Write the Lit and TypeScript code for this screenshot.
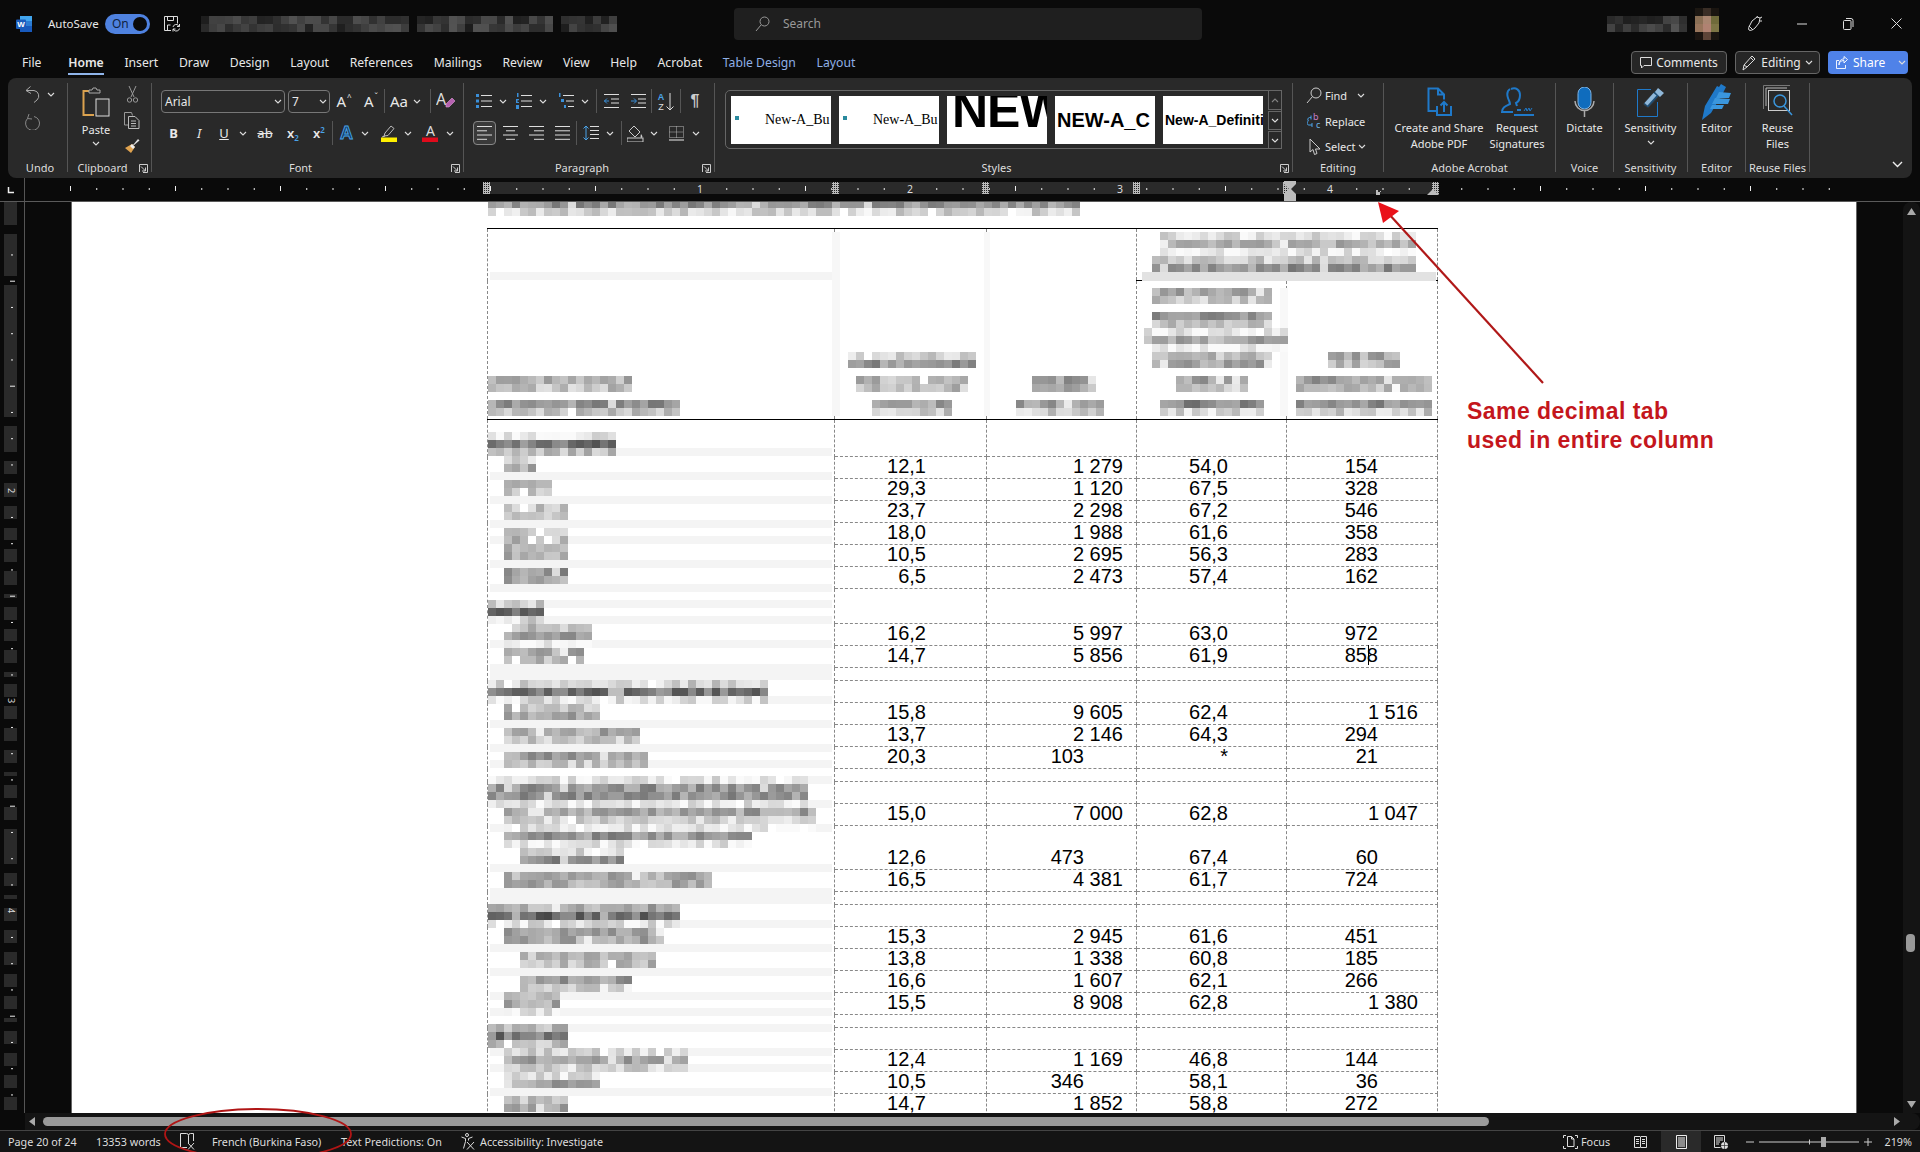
import { LitElement, html, css, svg } from 'lit';
import { customElement } from 'lit/decorators.js';

// small seeded generator so the pixelated areas stay the same between runs
let seed = 4711;
const rnd = () => {
  seed = (seed * 16807) % 2147483647;
  return seed / 2147483647;
};

const chev = html`<svg width="8" height="5" viewBox="0 0 8 5"><path d="M1 1l3 3 3-3" fill="none" stroke="#ddd" stroke-width="1.1"/></svg>`;
const lines = (ys: number[], x1: number, x2: number, c = '#ddd') =>
  ys.map((y) => svg`<path d="M${x1} ${y}H${x2}" stroke=${c} stroke-width="1"/>`);

const launcher = html`<svg class="launcher" width="9" height="9" viewBox="0 0 9 9"><path d="M.5 8V.5H8.5V8.5H4M2 2.5l4.5 4.5M6.5 3.5V7H3" fill="none" stroke="#ccc"/></svg>`;

const icons = {
  word: html`<svg width="16" height="16" viewBox="0 0 16 16"><path d="M4 0h12v16H4z" fill="#185abd"/><path d="M4 0h12v5H4z" fill="#41a5ee"/><path d="M4 5h12v5H4z" fill="#2b7cd3"/><rect x="0" y="3.5" width="10" height="9.5" rx="1" fill="#1a5cbc"/><text x="5" y="11" font-size="8" font-weight="700" text-anchor="middle" fill="#fff" font-family="Liberation Sans">W</text></svg>`,
  save: html`<svg width="18" height="17" viewBox="0 0 18 17"><path d="M8 15.5H1.5V1.5h13v7M4.5 1.5v4h6v-4M4.5 15V10h3" fill="none" stroke="#ddd"/><path d="M10 12a3.2 3.2 0 0 1 5.5-1.5l1 1M16.5 13.5a3.2 3.2 0 0 1-5.5 1.5l-1-1M16.5 9v2.5H14M10 16.5V14h2.5" fill="none" stroke="#ddd"/></svg>`,
  search: html`<svg width="15" height="16" viewBox="0 0 15 16"><circle cx="9.5" cy="5.5" r="4.5" fill="none" stroke="#999"/><path d="M6 9l-5 6" stroke="#999"/></svg>`,
  pen: html`<svg width="16" height="18" viewBox="0 0 16 18"><path d="M5 6l5-4 3 1-1 5-4 5c-2 2-5 3-6 2s0-4 1-5zM10 2l.5-1M13 3l2-1M13 6h2M2 11l4 4" fill="none" stroke="#ddd"/></svg>`,
  min: html`<svg width="10" height="2" viewBox="0 0 10 2"><path d="M0 1h10" stroke="#ddd"/></svg>`,
  restore: html`<svg width="11" height="12" viewBox="0 0 11 12"><rect x=".5" y="2.5" width="7.5" height="9" rx="1" fill="none" stroke="#ddd"/><path d="M3 .5h5a2 2 0 0 1 2 2V9" fill="none" stroke="#ddd"/></svg>`,
  close: html`<svg width="11" height="11" viewBox="0 0 11 11"><path d="M.5.5l10 10M10.5.5l-10 10" stroke="#ddd"/></svg>`,
  comment: html`<svg width="12" height="12" viewBox="0 0 12 12"><path d="M.5.5h11v8H4L1.5 11V8.5h-1z" fill="none" stroke="#ddd"/></svg>`,
  edit: html`<svg width="15" height="17" viewBox="0 0 15 17"><path d="M1 16l1-5 8-9 3 3-8 8zM2 11l3 2M8.500 3.500l3 3" fill="none" stroke="#ddd"/></svg>`,
  share: html`<svg width="12" height="13" viewBox="0 0 12 13"><path d="M3 4.500H.5v8h9V9M3 9c0-3 2-4.500 5-4.500V7l3.500-3.500L8 .5v2.500C4 3 3 6 3 9z" fill="none" stroke="#fff" stroke-width=".9"/></svg>`,
  undo: html`<svg width="16" height="17" viewBox="0 0 16 17"><path d="M5.500.5L1 4.500l5 3M1 4.500h8a5.500 5.500 0 0 1 3 9.500l-3 2.500" fill="none" stroke="#aaa"/></svg>`,
  redo: html`<svg width="16" height="17" viewBox="0 0 16 17"><path d="M4 1L2.500 5.500 7 6M2.500 5.500A7 7 0 1 0 9 3.500" fill="none" stroke="#888"/></svg>`,
  paste: html`<svg width="28" height="30" viewBox="0 0 28 30"><path d="M7 4H1.500v24H12" fill="none" stroke="#dba24f" stroke-width="2"/><path d="M7 6V3h3l1-2h3l1 2h3v3z" fill="none" stroke="#aaa"/><rect x="14" y="12" width="13" height="17" fill="#333" stroke="#ddd"/></svg>`,
  cut: html`<svg width="11" height="17" viewBox="0 0 11 17"><path d="M2 0l5 11M9 0L4 11" stroke="#999" fill="none"/><circle cx="2.500" cy="14" r="2.200" fill="none" stroke="#999"/><circle cx="8.500" cy="14" r="2.200" fill="none" stroke="#999"/></svg>`,
  copy: html`<svg width="16" height="17" viewBox="0 0 16 17"><path d="M4 13H.5V.5h7l1 3" fill="none" stroke="#999"/><path d="M4.500 4.500H11l4 4v8H4.500zM7 9h5M7 11.500h5M7 14h5" fill="none" stroke="#bbb"/></svg>`,
  brush: html`<svg width="16" height="16" viewBox="0 0 16 16"><path d="M9 7l5-6 1.500 1.500-6 5z" fill="#ddd"/><path d="M8 6l3 3-4 6-6-5z" fill="#e0a34f"/><path d="M8 6l3 3-2 2-3-3z" fill="#eee"/></svg>`,
  clear: html`<svg width="19" height="18" viewBox="0 0 19 18"><text x="0" y="13" font-size="16" fill="#ddd" font-family="Noto Sans">A</text><path d="M10 12l6-6 3 3-6 6h-3z" fill="#b561b0" stroke="#e0a0dc" stroke-width=".6"/></svg>`,
  textfx: html`<svg width="17" height="18" viewBox="0 0 17 18"><text x="8.500" y="15" text-anchor="middle" font-size="18" font-weight="700" fill="#123e66" stroke="#4aa3e8" stroke-width=".9" font-family="Liberation Sans">A</text></svg>`,
  high: html`<svg width="17" height="18" viewBox="0 0 17 18"><path d="M3 12l1-3 6-7 3 2.500-6 7zM1 13l3-1" fill="none" stroke="#bbb"/><rect y="13.500" width="16" height="4.500" fill="#fff000"/></svg>`,
  color: html`<svg width="17" height="18" viewBox="0 0 17 18"><text x="8.500" y="12" text-anchor="middle" font-size="14" fill="#ddd" font-family="Noto Sans">A</text><rect y="13.500" width="16" height="4.500" fill="#e00b1c"/></svg>`,
  bullets: html`<svg width="16" height="16" viewBox="0 0 16 16"><path d="M0 1h3v3H0zM0 6.500h3v3H0zM0 12h3v3H0z" fill="#3a8fd8"/>${lines([2.500, 8, 13.500], 5, 16)}</svg>`,
  numbers: html`<svg width="16" height="16" viewBox="0 0 16 16"><path d="M1 0h1.500v4H1zM0 6h3v1.200H1.500V9H3v1H0zM0 12h3v4H0z" fill="#3a8fd8"/>${lines([2.500, 8, 13.500], 5, 16)}</svg>`,
  multi: html`<svg width="16" height="16" viewBox="0 0 16 16"><path d="M1 0h1.500v4H1zM3 6h3v3H3zM6 12h2v3H6z" fill="#3a8fd8"/>${lines([2.500], 5, 16)}${lines([8], 8, 16)}${lines([13.500], 10, 16)}</svg>`,
  outdent: html`<svg width="15" height="14" viewBox="0 0 15 14"><path d="M5 7H0M3 4.500L.5 7 3 9.500" fill="none" stroke="#3a8fd8"/>${lines([.5, 13.500], 0, 15)}${lines([5, 9], 7, 15)}</svg>`,
  indent: html`<svg width="15" height="14" viewBox="0 0 15 14"><path d="M0 7h5M3 4.500L5.500 7 3 9.500" fill="none" stroke="#3a8fd8"/>${lines([.5, 13.500], 0, 15)}${lines([5, 9], 7, 15)}</svg>`,
  sort: html`<svg width="18" height="19" viewBox="0 0 18 19"><text x="4" y="8" font-size="9" text-anchor="middle" font-weight="700" fill="#4aa3e8" font-family="Liberation Sans">A</text><text x="4" y="18" font-size="9" text-anchor="middle" fill="#ddd" font-family="Liberation Sans">Z</text><path d="M13 1v17M9.500 14.500L13 18l3.500-3.500" fill="none" stroke="#ddd"/></svg>`,
  left: html`<svg width="15" height="14" viewBox="0 0 15 14">${lines([.5, 9], 0, 15)}${lines([4.800, 13.300], 0, 10)}</svg>`,
  center: html`<svg width="15" height="14" viewBox="0 0 15 14">${lines([.5, 9], 0, 15)}${lines([4.800, 13.300], 3, 12)}</svg>`,
  right: html`<svg width="15" height="14" viewBox="0 0 15 14">${lines([.5, 9], 0, 15)}${lines([4.800, 13.300], 5, 15)}</svg>`,
  justify: html`<svg width="15" height="14" viewBox="0 0 15 14">${lines([.5, 4.800, 9, 13.300], 0, 15)}</svg>`,
  spacing: html`<svg width="16" height="16" viewBox="0 0 16 16"><path d="M3 1v14M.5 3.500L3 1l2.500 2.500M.5 12.500L3 15l2.500-2.500" fill="none" stroke="#4aa3e8"/>${lines([1.500, 5.500, 9.500, 13.500], 7, 16)}</svg>`,
  shade: html`<svg width="17" height="17" viewBox="0 0 17 17"><path d="M7 1l6 6-5 5-6-6z" fill="none" stroke="#ccc"/><path d="M14 9c1 1.500 2 2.500 1 3.500s-2 0-1-3.500z" fill="#ccc"/><rect y="13" width="16" height="4" fill="none" stroke="#ccc"/></svg>`,
  borders: html`<svg width="15" height="15" viewBox="0 0 15 15"><path d="M.5.5h14v11H.5zM7.500.5v11M.5 6h14" fill="none" stroke="#bbb" stroke-dasharray="1 1"/><path d="M0 14h15" stroke="#eee"/></svg>`,
  find: html`<svg width="16" height="17" viewBox="0 0 16 17"><circle cx="10" cy="6" r="5" fill="none" stroke="#ccc"/><path d="M6.500 9.500L1 16" stroke="#ccc"/></svg>`,
  replace: html`<svg width="15" height="16" viewBox="0 0 15 16"><text x="6" y="7" font-size="9" fill="#c77fc7" font-family="Noto Sans">b</text><text x="9" y="15" font-size="9" fill="#6fb6e8" font-family="Noto Sans">c</text><path d="M4 4.500H2.500a2 2 0 0 0-1 3.500M5 12H3a2 2 0 0 1-1.500-4M4 2.500v4M5 10v4" fill="none" stroke="#4aa3e8"/></svg>`,
  select: html`<svg width="11" height="18" viewBox="0 0 11 18"><path d="M1 1v13l3-2.500 1.500 5 2.500-1-1.500-4.500H11z" fill="none" stroke="#ccc"/></svg>`,
  create: html`<svg width="25" height="30" viewBox="0 0 25 30"><path d="M11 24H1.500V1.500H11l6 6v5M11 1.500v6h6" fill="none" stroke="#1f79c9" stroke-width="2"/><path d="M10 19v9h14v-9M17 25V15M13.500 18.500L17 15l3.500 3.500" fill="none" stroke="#1f79c9" stroke-width="2"/></svg>`,
  request: html`<svg width="33" height="30" viewBox="0 0 33 30"><path d="M10 2c5-2 9 1 9 6s-2 7-4 8l1 3M9 2C6 4 6 8 7 11s2 4 2 6c-4 2-8 3-8 8h11" fill="none" stroke="#1f79c9" stroke-width="2"/><path d="M16 22l2 2 2-2m-4 2l2-2 2 2M23 24l2-3 1 3 2-3 1 3 2-3" fill="none" stroke="#1f79c9"/><path d="M13 28h20" stroke="#1f79c9" stroke-width="2"/></svg>`,
  mic: html`<svg width="21" height="30" viewBox="0 0 21 30"><rect x="4" y="0" width="13" height="22" rx="6.500" fill="#0f6cbd" stroke="#7cb4e6"/><path d="M1 14a9.500 9.500 0 0 0 19 0M10.500 24v6" fill="none" stroke="#aaa" stroke-width="1.500"/></svg>`,
  sens: html`<svg width="28" height="30" viewBox="0 0 28 30"><path d="M14 2.500H.5v27h20V15" fill="none" stroke="#1f79c9"/><path d="M6 17l13-14 5 4-13 14z" fill="#1f4e75" stroke="#333"/><path d="M18 5l3-4 6 5-4 4zM7.500 16l9-10 3 2.500-9 10z" fill="#8fb7d8"/></svg>`,
  editor: html`<svg width="31" height="37" viewBox="0 0 31 37"><path d="M1 37l3-14L16 3l2 1 2-3 5 3-2 4-1 2L10 30z" fill="#1f79c9"/><path d="M18 9l12 1-2 5-13 0zM14 15l15 1-2 5-16 0zM11 22l12 0-2 4-12 0z" fill="#3a96dd"/></svg>`,
  reuse: html`<svg width="30" height="34" viewBox="0 0 30 34"><path d="M3 21V3h21" fill="none" stroke="#bbb"/><path d="M.5 24V.5H27" fill="none" stroke="#777"/><rect x="5.500" y="5.500" width="21" height="20" fill="none" stroke="#ccc"/><circle cx="17" cy="16" r="6" fill="none" stroke="#3a96dd" stroke-width="1.500"/><path d="M21 21l8 9" stroke="#3a96dd" stroke-width="1.500"/></svg>`,
  collapse: html`<svg width="11" height="7" viewBox="0 0 11 7"><path d="M1 1l4.500 4.500L10 1" fill="none" stroke="#eee" stroke-width="1.400"/></svg>`,
  spell: html`<svg width="15" height="17" viewBox="0 0 15 17"><path d="M7 14.500H.5V.5h6a2 2 0 0 1 2 2v8M8.500 2.500a2 2 0 0 1 2-2h3V8" fill="none" stroke="#ddd"/><path d="M8 10l6 6.500M14 10l-6 6.500" stroke="#ddd"/></svg>`,
  access: html`<svg width="15" height="17" viewBox="0 0 15 17"><circle cx="6" cy="2" r="1.500" fill="none" stroke="#ddd"/><path d="M.5 4l4 1.500v3l-2 7M11.500 4l-4 1.500v2" fill="none" stroke="#ddd"/><path d="M6 9l7 7.500M13 9l-7 7.500" stroke="#ddd"/></svg>`,
  focus: html`<svg width="15" height="14" viewBox="0 0 15 14"><path d="M.5 3V.5H3M12 .5h2.500V3M.5 11v2.500H3M12 13.500h2.500V11" fill="none" stroke="#ddd"/><path d="M4.500 11.500v-10h4l2.500 2.500v7.500zM8.500 1.500V4H11" fill="none" stroke="#ddd"/></svg>`,
  read: html`<svg width="13" height="14" viewBox="0 0 13 14"><path d="M.5 1.500h5.500l.5.500.5-.5h5.500v11H7l-.5.500-.5-.5H.5zM6.500 2v10.500M2 4.500h3M2 6.500h3M2 8.500h3M8 4.500h3M8 6.500h3M8 8.500h3" fill="none" stroke="#ddd"/></svg>`,
  print: html`<svg width="11" height="14" viewBox="0 0 11 14"><path d="M.5.5h10v13H.5zM2 3h7M2 5h7M2 7h7M2 9h7M2 11h7" fill="none" stroke="#eee"/></svg>`,
  web: html`<svg width="14" height="14" viewBox="0 0 14 14"><path d="M.5.5h10v7M.5.5v12h6M2 3h7M2 5h7M2 7h4M2 9h3" fill="none" stroke="#ddd"/><circle cx="10.500" cy="10.500" r="3.500" fill="#ddd"/><path d="M7 10.500h7M10.500 7v7" stroke="#333" stroke-width=".7"/></svg>`,
};

// [x, y, columns, ...row shades], all on the 8px grid of the blurred original
const BLURS: number[][] = [
  [488, 200, 74, 150, 215],
  [1160, 232, 32, 225, 170, 235], [1152, 256, 33, 205, 150],
  [1152, 288, 15, 165, 200], [1152, 312, 15, 150, 200], [1144, 328, 18, 235, 170, 240],
  [1152, 352, 15, 190, 165], [1176, 376, 9, 165, 200], [1160, 400, 13, 140, 215],
  [848, 352, 16, 215, 150], [856, 376, 14, 185, 190], [872, 400, 10, 160, 200],
  [1032, 376, 8, 160, 175], [1016, 400, 11, 165, 205],
  [1328, 352, 9, 170, 185], [1296, 376, 17, 160, 180], [1296, 400, 17, 150, 205],
  [488, 376, 18, 175, 195], [488, 400, 24, 150, 200],
  [488, 432, 16, 235, 120, 190],
  [504, 456, 4, 205, 170], [504, 480, 6, 185, 200], [504, 504, 8, 195, 200],
  [504, 528, 8, 190, 190], [504, 544, 8, 170, 180], [504, 568, 8, 150, 170],
  [488, 600, 7, 200, 120, 215], [504, 624, 11, 190, 150, 235], [504, 648, 10, 170, 190],
  [488, 680, 35, 210, 120, 225], [504, 704, 12, 190, 165], [504, 728, 17, 170, 200], [504, 752, 18, 160, 200],
  [488, 776, 40, 232, 150, 150, 232], [504, 808, 39, 165, 210, 232], [504, 832, 31, 150, 235],
  [520, 848, 13, 215, 145], [504, 872, 26, 175, 175],
  [488, 904, 24, 170, 110, 225], [504, 928, 20, 170, 170], [520, 952, 17, 185, 190], [520, 976, 14, 160, 215],
  [504, 992, 7, 200, 170, 225], [488, 1024, 10, 190, 120, 190], [504, 1048, 23, 215, 160, 215],
  [504, 1072, 12, 225, 160], [504, 1096, 8, 195, 160],
];
const BANDS = [272, 448, 472, 496, 520, 536, 560, 584, 600, 616, 640, 664, 672, 696, 720, 744, 760, 776, 800, 824, 864, 888, 896, 920, 944, 968, 992, 1008, 1024, 1048, 1064, 1088];

const blurCells = (x: number, y: number, cols: number, shades: number[], gapChance = 0.04) =>
  shades.map((base, r) =>
    Array.from({ length: cols }, (_, c) => {
      const spread = base < 130 ? 80 : 66;
      const g = rnd() < gapChance ? Math.min(255, base + 70) : Math.max(50, Math.min(250, Math.round(base + (rnd() - 0.5) * spread)));
      return svg`<rect x=${x + c * 8} y=${y + r * 8} width="8" height="8" fill="rgb(${g},${g},${g})"/>`;
    })
  );

const darkCells = (x: number, y: number, cols: number, rows: number) =>
  Array.from({ length: rows }, (_, r) =>
    Array.from({ length: cols }, (_, c) => {
      const g = Math.round(28 + rnd() * 55);
      return svg`<rect x=${x + c * 8} y=${y + r * 8} width="8" height="8" fill="rgb(${g},${g},${g})"/>`;
    })
  );

type Row = [number, string?, string?, string?, string?];
const ROWS: Row[] = [
  [37], [22, '12,1', '1 279', '54,0', '154'], [21, '29,3', '1 120', '67,5', '328'], [22, '23,7', '2 298', '67,2', '546'],
  [22, '18,0', '1 988', '61,6', '358'], [22, '10,5', '2 695', '56,3', '283'], [22, '6,5', '2 473', '57,4', '162'],
  [35], [22, '16,2', '5 997', '63,0', '972'], [22, '14,7', '5 856', '61,9', '858'],
  [13], [22], [22, '15,8', '9 605', '62,4', '1 516'], [22, '13,7', '2 146', '64,3', '294'], [22, '20,3', '103', '*', '21'],
  [13], [22], [22, '15,0', '7 000', '62,8', '1 047'], [44, '12,6', '473', '67,4', '60'], [22, '16,5', '4 381', '61,7', '724'],
  [13], [22], [22, '15,3', '2 945', '61,6', '451'], [22, '13,8', '1 338', '60,8', '185'], [22, '16,6', '1 607', '62,1', '266'], [22, '15,5', '8 908', '62,8', '1 380'],
  [13], [22], [22, '12,4', '1 169', '46,8', '144'], [22, '10,5', '346', '58,1', '36'], [22, '14,7', '1 852', '58,8', '272'],
];
const MID = new Set(['103', '473', '346']);
const FAR = new Set(['1 516', '1 047', '1 380']);

// ruler ticks are a quarter of a 210px inch apart
const Q = 26.25;

@customElement('app-root')
export class AppRoot extends LitElement {
  static styles = css`
    :host {
      display: block;
      position: relative;
      width: 1920px;
      height: 1152px;
      overflow: hidden;
      background: #0a0a0a;
      color: #e8e8e8;
      font-family: 'Noto Sans', 'Open Sans', sans-serif;
      font-size: 12px;
    }
    svg { display: block; flex: none; }

    .titlebar { display: flex; align-items: center; height: 47px; }
    .tb-left { width: 734px; display: flex; align-items: center; padding-left: 16px; box-sizing: border-box; }
    .autosave { margin-left: 16px; width: 57px; font-size: 11.500px; }
    .toggle {
      width: 45px; height: 20px; border-radius: 10px; background: #4f82e0; color: #10223f;
      display: flex; align-items: center; justify-content: space-between; padding: 0 3px 0 7px; box-sizing: border-box; font-size: 12px;
    }
    .knob { width: 14px; height: 14px; border-radius: 50%; background: #0a0a0a; }
    .save { margin: 0 20px 0 13px; }
    .search {
      width: 468px; height: 32px; background: #1f1f1f; border-radius: 4px; display: flex; align-items: center;
      padding-left: 21px; box-sizing: border-box; gap: 13px; color: #999;
    }
    .tb-right { flex: 1; display: flex; align-items: center; justify-content: flex-end; }
    .who { margin-right: 12px; }
    .win { width: 47px; display: flex; justify-content: center; }
    .win:last-child { width: 48px; }

    .tabs { display: flex; align-items: center; height: 31px; padding: 0 12px 0 22px; gap: 20.700px; font-size: 12.200px; }
    .tab { position: relative; line-height: 31px; }
    .tab:first-child { margin-right: 6px; }
    .tab.on { font-weight: 600; }
    .tab.on::after { content: ''; position: absolute; left: 0; right: 0; bottom: 3px; height: 2px; background: #8fb4ea; }
    .tab.ctx { color: #8fb0e6; }
    .actions { margin-left: auto; display: flex; gap: 8px; font-size: 12px; }
    .btn {
      height: 23px; border: 1px solid #666; border-radius: 4px; background: #262626; display: flex; align-items: center;
      justify-content: center; gap: 4px; box-sizing: border-box;
    }
    .btn.comments { width: 96px; }
    .btn.editing { width: 85px; }
    .btn.share { width: 80px; background: #4f82e8; border: none; color: #fff; justify-content: flex-start; padding-left: 8px; gap: 5px; }
    .btn.share svg:last-child { margin-left: 8px; }

    .ribbon { display: flex; margin: 0 8px; height: 100px; background: #292929; border-radius: 8px; padding-top: 5px; box-sizing: border-box; font-size: 11px; }
    .group { height: 89px; border-right: 1px solid #555; box-sizing: content-box; flex: none; }
    .body { height: 78px; box-sizing: border-box; }
    .glabel { position: relative; height: 14px; line-height: 14px; text-align: center; font-size: 11px; white-space: nowrap; color: #ddd; }
    .glabel.pad { padding-right: 14px; box-sizing: border-box; }
    .glabel.undo { padding-left: 5px; box-sizing: border-box; }
    .launcher { position: absolute; right: 3px; top: 3px; }
    .g-undo { width: 59px; }
    .g-clip { width: 83px; }
    .g-font { width: 311px; }
    .g-para { width: 250px; }
    .g-style { width: 577px; }
    .g-edit { width: 90px; }
    .g-acro { width: 171px; }
    .g-voice { width: 57px; }
    .g-sens { width: 73px; }
    .g-editor { width: 57px; }
    .g-reuse { width: 63px; }

    .undo-body { padding: 3px 0 0 17px; display: flex; flex-direction: column; gap: 10px; }
    .undo-row { display: flex; align-items: center; gap: 6px; }
    .clip-body { display: grid; grid-template-columns: 56px 16px; }
    .paste { display: flex; flex-direction: column; align-items: center; padding-top: 4px; }
    .paste span { margin-top: 4px; line-height: 18px; }
    .paste svg:last-child { margin-top: 2px; }
    .clip-side { display: flex; flex-direction: column; align-items: center; gap: 9px; padding-top: 3px; }

    .rows { padding-top: 6px; display: flex; flex-direction: column; gap: 9px; }
    .r { display: grid; height: 23px; align-items: center; justify-items: center; }
    .sep { width: 1px; height: 24px; background: #555; }
    .font-r1 { grid-template-columns: 9px 124px 3px 42px 28px 26px 1px 1px 26px 10px 8px 1px 28px; }
    .font-r2 { grid-template-columns: 9px 25px 26px 24px 14px 30px 26px 26px 1px 27px 10px 5px 28px 10px 2px 30px 10px; }
    .select {
      width: 100%; height: 23px; border: 1px solid #777; border-radius: 4px; box-sizing: border-box; display: flex;
      align-items: center; justify-content: space-between; padding: 0 2px 0 3px; font-size: 12px;
    }
    .gl { font-size: 15px; display: flex; align-items: flex-start; gap: 1px; line-height: 21px; }
    .gl small { font-size: 8px; line-height: 12px; }
    .b { font-weight: 700; font-size: 13px; }
    .i { font-style: italic; font-size: 13px; }
    .u { text-decoration: underline; font-size: 13px; }
    .ab { text-decoration: line-through; font-size: 13px; }
    .sub, .sup { font-size: 13px; font-weight: 600; }
    .sub small { color: #4aa3e8; font-size: 8px; vertical-align: -3px; }
    .sup small { color: #4aa3e8; font-size: 8px; vertical-align: 5px; }
    .para-r1 { grid-template-columns: 6px 28px 10px 5px 22px 3px 10px 4px 28px 10px 6px 1px 28px 26px 1px 28px 1px 28px; }
    .para-r2 { grid-template-columns: 9px 23px 28px 24px 28px 1px 28px 10px 6px 1px 26px 12px 1px 30px 10px; }
    .active { width: 23px; height: 24px; border: 1px solid #888; border-radius: 4px; background: #3a3a3a; box-sizing: border-box; display: flex; align-items: center; justify-content: center; }
    .pilcrow { font-size: 16px; font-weight: 700; color: #ccc; font-family: 'Liberation Sans', sans-serif; }

    .style-body { padding: 7px 0 0 10px; }
    .gallery { display: flex; height: 59px; width: 557px; border: 1px solid #666; border-radius: 5px; box-sizing: border-box; padding: 5px 0 5px 5px; gap: 8px; position: relative; }
    .tile { width: 100px; height: 48px; background: #fff; color: #000; overflow: hidden; flex: none; position: relative; display: flex; align-items: center; white-space: nowrap; font-family: 'Liberation Sans', sans-serif; box-sizing: border-box; }
    .t1 { font: 14px 'Liberation Serif', serif; padding-left: 34px; }
    .t1::before { content: ''; position: absolute; left: 4px; top: 20px; width: 4px; height: 4px; background: #2a8a9e; }
    .t3 { font-size: 50px; font-weight: 700; line-height: 48px; padding-left: 5px; align-items: flex-start; letter-spacing: -1px; }
    .t3 span { margin-top: -10px; }
    .t4 { font-size: 20px; font-weight: 700; padding-left: 2px; }
    .t5 { font-size: 14px; font-weight: 700; padding-left: 2px; }
    .more { position: absolute; right: -1px; top: -1px; bottom: -1px; width: 14px; display: grid; grid-template-rows: 20px 19px 18px; gap: 1px; }
    .more div { border: 1px solid #666; display: flex; align-items: center; justify-content: center; background: #292929; }
    .more div:first-child svg { transform: scaleY(-1); opacity: .5; }

    .edit-body { padding-left: 12px; }
    .edit-row { display: flex; align-items: center; height: 25.500px; gap: 2px; }
    .edit-icon { width: 18px; display: flex; justify-content: center; }
    .edit-row .tail { margin-left: 8px; }
    .bigs { display: flex; padding-left: 2px; }
    .big { display: flex; flex-direction: column; align-items: center; line-height: 16px; text-align: center; white-space: nowrap; flex: 1; }
    .big .art { height: 37px; display: flex; align-items: center; justify-content: center; flex: none; }
    .big .down { margin-top: 4px; }
    .w106 { flex: none; width: 106px; }
    .w50 { flex: none; width: 50px; }
    .collapse { margin: 78px 0 0 82px; }

    .ruler { height: 23px; border-bottom: 1px solid #5a5a5a; }

    .main { display: flex; height: 911px; }
    .vruler { width: 24px; border-right: 1px solid #555; flex: none; }
    .gutter { width: 46px; border-right: 1px solid #666; flex: none; }
    .page { width: 1784px; flex: none; background: #fff; position: relative; overflow: hidden; padding: 26px 0 0 415px; box-sizing: border-box; }
    .blur { position: absolute; left: 0; top: 0; }
    .side { flex: 1; border-left: 1px solid #666; display: flex; justify-content: flex-end; }
    .vscroll { width: 17px; background: #141414; border-radius: 8px 8px 0 0; display: flex; flex-direction: column; align-items: center; justify-content: space-between; padding: 6px 0 5px; box-sizing: border-box; position: relative; }
    .vthumb { position: absolute; left: 3px; top: 732px; width: 9px; height: 18px; background: #9a9a9a; border-radius: 4px; }

    table { border-collapse: collapse; table-layout: fixed; width: 950px; color: #000; font-family: 'Liberation Sans', sans-serif; font-size: 20px; line-height: 18px; position: relative; }
    col.w1 { width: 347px; }
    col.w2 { width: 152px; }
    col.w3, col.w4 { width: 150px; }
    col.w5 { width: 151px; }
    td { padding: 0; border-left: 1px dashed #888; border-right: 1px dashed #888; }
    .head td { border-bottom: 1px solid #000; border-top: 1px solid #000; }
    .head-a { height: 51px; }
    .head-b { height: 138px; }
    tbody td { border-top: 1px dashed #888; border-bottom: 1px dashed #888; vertical-align: bottom; text-align: right; white-space: nowrap; padding-bottom: 3px; }
    tbody td:first-child { border-top: none; border-bottom: none; }
    .c2 { padding-right: 60px; }
    .c3 { padding-right: 13px; }
    .c3.mid { padding-right: 52px; }
    .c4 { padding-right: 58px; }
    .c5 { padding-right: 59px; }
    .c5.far { padding-right: 19px; }

    .hscroll { height: 17px; margin-left: 25px; background: #141414; display: flex; align-items: center; padding: 0 20px 0 4px; border-radius: 0 8px 8px 0; }
    .hthumb { width: 1446px; height: 9px; background: #9a9a9a; border-radius: 5px; margin: 0 auto 0 8px; }
    .status { height: 22px; border-top: 1px solid #444; background: #141414; display: flex; align-items: center; box-sizing: border-box; font-size: 10.800px; color: #ddd; white-space: nowrap; padding-left: 8px; }
    .s-page { width: 88px; }
    .s-words { width: 84px; }
    .s-spell { width: 32px; }
    .s-lang { width: 129px; }
    .s-pred { width: 120px; }
    .s-acc { width: 19px; }
    .s-right { margin-left: auto; display: flex; align-items: center; height: 100%; }
    .s-focus { display: flex; align-items: center; gap: 3px; width: 71px; }
    .s-read { width: 27px; }
    .s-print { width: 40px; height: 100%; background: #2a2a2a; display: flex; align-items: center; justify-content: center; }
    .s-web { width: 40px; display: flex; justify-content: center; }
    .zoom { display: flex; align-items: center; padding-left: 5px; }
    .s-pct { width: 36px; text-align: right; padding-right: 8px; }

    .overlay { position: absolute; left: 0; top: 0; pointer-events: none; }
    .note { position: absolute; left: 1467px; top: 397px; color: #c4161c; font: 700 23px/29px 'Liberation Sans', sans-serif; white-space: nowrap; letter-spacing: .45px; }
  `;

  private renderTitle() {
    return html`<div class="titlebar">
      <div class="tb-left">
        ${icons.word}
        <span class="autosave">AutoSave</span>
        <div class="toggle"><span>On</span><div class="knob"></div></div>
        <div class="save">${icons.save}</div>
        <svg width="416" height="16" viewBox="200 16 416 16" shape-rendering="crispEdges">
          ${darkCells(200, 16, 26, 2)}${darkCells(416, 16, 17, 2)}${darkCells(560, 16, 7, 2)}
        </svg>
      </div>
      <div class="search">${icons.search}<span>Search</span></div>
      <div class="tb-right">
        <svg class="who" width="112" height="32" viewBox="1608 8 112 32" shape-rendering="crispEdges">
          ${darkCells(1608, 16, 10, 2)}
          <rect x="1696" y="8" width="8" height="8" fill="#1c1712"/><rect x="1704" y="8" width="8" height="8" fill="#3a2e26"/><rect x="1712" y="8" width="8" height="8" fill="#1a1510"/>
          <rect x="1696" y="16" width="8" height="8" fill="#8a6f55"/><rect x="1704" y="16" width="8" height="8" fill="#a98570"/><rect x="1712" y="16" width="8" height="8" fill="#6f6a3a"/>
          <rect x="1696" y="24" width="8" height="8" fill="#98755c"/><rect x="1704" y="24" width="8" height="8" fill="#b08272"/><rect x="1712" y="24" width="8" height="8" fill="#7d7545"/>
          <rect x="1696" y="32" width="8" height="8" fill="#1b1410"/><rect x="1704" y="32" width="8" height="8" fill="#5d4438"/><rect x="1712" y="32" width="8" height="8" fill="#1a1510"/>
        </svg>
        <div class="win">${icons.pen}</div>
        <div class="win">${icons.min}</div>
        <div class="win">${icons.restore}</div>
        <div class="win">${icons.close}</div>
      </div>
    </div>`;
  }

  private renderTabs() {
    const names = ['File', 'Home', 'Insert', 'Draw', 'Design', 'Layout', 'References', 'Mailings', 'Review', 'View', 'Help', 'Acrobat'];
    return html`<div class="tabs">
      ${names.map((n) => html`<span class="tab ${n === 'Home' ? 'on' : ''}">${n}</span>`)}
      <span class="tab ctx">Table Design</span>
      <span class="tab ctx">Layout</span>
      <div class="actions">
        <div class="btn comments">${icons.comment}<span>Comments</span></div>
        <div class="btn editing">${icons.edit}<span>Editing</span>${chev}</div>
        <div class="btn share">${icons.share}<span>Share</span>${chev}</div>
      </div>
    </div>`;
  }

  private renderFont() {
    return html`<div class="group g-font">
      <div class="body rows">
        <div class="r font-r1">
          <i></i>
          <div class="select"><span>Arial</span>${chev}</div>
          <i></i>
          <div class="select"><span>7</span>${chev}</div>
          <div class="gl">A<small>^</small></div>
          <div class="gl">A<small>ˇ</small></div>
          <div class="sep"></div>
          <i></i>
          <div class="gl">Aa</div>
          ${chev}
          <i></i>
          <div class="sep"></div>
          ${icons.clear}
        </div>
        <div class="r font-r2">
          <i></i>
          <span class="b">B</span>
          <span class="i">I</span>
          <span class="u">U</span>
          ${chev}
          <span class="ab">ab</span>
          <span class="sub">x<small>2</small></span>
          <span class="sup">x<small>2</small></span>
          <div class="sep"></div>
          ${icons.textfx}
          ${chev}
          <i></i>
          ${icons.high}
          ${chev}
          <i></i>
          ${icons.color}
          ${chev}
        </div>
      </div>
      <div class="glabel pad">Font${launcher}</div>
    </div>`;
  }

  private renderParagraph() {
    return html`<div class="group g-para">
      <div class="body rows">
        <div class="r para-r1">
          <i></i>${icons.bullets}${chev}<i></i>${icons.numbers}<i></i>${chev}<i></i>${icons.multi}${chev}<i></i>
          <div class="sep"></div>
          ${icons.outdent}${icons.indent}
          <div class="sep"></div>
          ${icons.sort}
          <div class="sep"></div>
          <span class="pilcrow">¶</span>
        </div>
        <div class="r para-r2">
          <i></i>
          <div class="active">${icons.left}</div>
          ${icons.center}${icons.right}${icons.justify}
          <div class="sep"></div>
          ${icons.spacing}${chev}<i></i>
          <div class="sep"></div>
          ${icons.shade}${chev}<i></i>${icons.borders}${chev}
        </div>
      </div>
      <div class="glabel pad">Paragraph${launcher}</div>
    </div>`;
  }

  private renderRibbon() {
    return html`<div class="ribbon">
      <div class="group g-undo">
        <div class="body undo-body">
          <div class="undo-row">${icons.undo}${chev}</div>
          <div class="undo-row">${icons.redo}</div>
        </div>
        <div class="glabel undo">Undo</div>
      </div>
      <div class="group g-clip">
        <div class="body clip-body">
          <div class="paste">${icons.paste}<span>Paste</span>${chev}</div>
          <div class="clip-side">${icons.cut}${icons.copy}${icons.brush}</div>
        </div>
        <div class="glabel pad">Clipboard${launcher}</div>
      </div>
      ${this.renderFont()}
      ${this.renderParagraph()}
      <div class="group g-style">
        <div class="body style-body">
          <div class="gallery">
            <div class="tile t1">New-A_Bu</div>
            <div class="tile t1">New-A_Bu</div>
            <div class="tile t3"><span>NEW</span></div>
            <div class="tile t4">NEW-A_C</div>
            <div class="tile t5">New-A_Definiti</div>
            <div class="more"><div>${chev}</div><div>${chev}</div><div>${chev}</div></div>
          </div>
        </div>
        <div class="glabel pad">Styles${launcher}</div>
      </div>
      <div class="group g-edit">
        <div class="body edit-body">
          <div class="edit-row"><span class="edit-icon">${icons.find}</span><span>Find</span><span class="tail">${chev}</span></div>
          <div class="edit-row"><span class="edit-icon">${icons.replace}</span><span>Replace</span></div>
          <div class="edit-row"><span class="edit-icon">${icons.select}</span><span>Select</span>${chev}</div>
        </div>
        <div class="glabel">Editing</div>
      </div>
      <div class="group g-acro">
        <div class="body bigs">
          <div class="big w106"><div class="art">${icons.create}</div>Create and Share<br />Adobe PDF</div>
          <div class="big w50"><div class="art">${icons.request}</div>Request<br />Signatures</div>
        </div>
        <div class="glabel">Adobe Acrobat</div>
      </div>
      <div class="group g-voice">
        <div class="body big"><div class="art">${icons.mic}</div>Dictate</div>
        <div class="glabel">Voice</div>
      </div>
      <div class="group g-sens">
        <div class="body big"><div class="art">${icons.sens}</div>Sensitivity<span class="down">${chev}</span></div>
        <div class="glabel">Sensitivity</div>
      </div>
      <div class="group g-editor">
        <div class="body big"><div class="art">${icons.editor}</div>Editor</div>
        <div class="glabel">Editor</div>
      </div>
      <div class="group g-reuse">
        <div class="body big"><div class="art">${icons.reuse}</div>Reuse<br />Files</div>
        <div class="glabel">Reuse Files</div>
      </div>
      <div class="collapse">${icons.collapse}</div>
    </div>`;
  }

  private renderRuler() {
    const ticks = [];
    for (let k = -16; k <= 51; k++) {
      const x = 490 + k * Q;
      if (k % 8 === 0 && k > 0 && k < 40) {
        ticks.push(svg`<text x=${x} y="192.500" text-anchor="middle" font-size="10.500" fill="#ddd" font-family="Noto Sans">${k / 8}</text>`);
      } else if (k % 4 === 0) {
        ticks.push(svg`<rect x=${x} y="186" width="1" height="5" fill="#eee"/>`);
      } else {
        ticks.push(svg`<rect x=${x} y="188" width="1" height="2" fill="#eee"/>`);
      }
    }
    const hatch = (x: number) => svg`<rect x=${x - 3} y="182" width="7" height="12" fill="url(#hatch)"/>`;
    return html`<div class="ruler">
      <svg width="1920" height="23" viewBox="0 178 1920 23">
        <defs><pattern id="hatch" width="2" height="2" patternUnits="userSpaceOnUse"><rect width="2" height="2" fill="#bbb"/><rect width="1" height="1" fill="#222"/></pattern></defs>
        <rect x="490" y="182" width="942" height="12" fill="#2a2a2a"/>
        <path d="M8.500 187v5.500H14" fill="none" stroke="#eee" stroke-width="1.500"/>
        <path d="M24.500 178v23" stroke="#555"/>
        ${ticks}
        ${[486, 835, 985, 1136, 1286, 1435].map(hatch)}
        <path d="M1284 181h12v3l-5 5 5 5v7h-12v-7l5-5-5-5z" fill="#bcbcbc"/>
        <path d="M1374 195h6v-3h-2v-2h-2v5zM1380 191h1v1h-1z" fill="#bbb"/>
        <path d="M1427 195l6-6 6 6z" fill="#bcbcbc"/>
      </svg>
    </div>`;
  }

  private renderVRuler() {
    const segs = [[202, 225], [234, 276], [285, 417], [426, 452], [461, 474], [483, 497], [506, 519], [528, 540], [549, 562], [571, 585], [594, 598], [607, 620], [629, 641], [650, 663], [672, 677], [684, 697], [706, 719], [728, 741], [750, 763], [772, 776], [785, 798], [807, 820], [829, 864], [873, 886], [895, 899], [908, 921], [930, 943], [952, 965], [974, 987], [996, 1009], [1018, 1022], [1031, 1044], [1053, 1066], [1075, 1088], [1097, 1110]];
    const ticks = [];
    for (let k = -9; k < 24; k++) {
      const y = 490.7 + k * Q;
      if (k === 0 || k === 8 || k === 16) {
        ticks.push(svg`<text transform="translate(8 ${y}) rotate(90)" text-anchor="middle" font-size="9" fill="#ddd" font-family="Noto Sans">${2 + k / 8}</text>`);
      } else if (k % 4 === 0) {
        ticks.push(svg`<rect x="10" y=${y} width="5" height="1" fill="#eee"/>`);
      } else {
        ticks.push(svg`<rect x="11" y=${y} width="2" height="1" fill="#eee"/>`);
      }
    }
    return html`<div class="vruler">
      <svg width="24" height="911" viewBox="0 202 24 911">
        ${segs.map(([a, b]) => svg`<rect x="4" y=${a} width="13" height=${b - a} fill="#2a2a2a"/>`)}
        ${ticks}
      </svg>
    </div>`;
  }

  private renderTable() {
    return html`<table>
      <colgroup><col class="w1" /><col class="w2" /><col class="w3" /><col class="w4" /><col class="w5" /></colgroup>
      <thead>
        <tr class="head"><td rowspan="2"></td><td rowspan="2"></td><td rowspan="2"></td><td colspan="2" class="head-a"></td></tr>
        <tr class="head"><td class="head-b"></td><td></td></tr>
      </thead>
      <tbody>
        ${ROWS.map(([h, a, b, c, d]) => html`<tr style="height:${h}px">
          <td></td>
          <td class="c2">${a}</td>
          <td class="c3 ${b && MID.has(b) ? 'mid' : ''}">${b}</td>
          <td class="c4">${c}</td>
          <td class="c5 ${d && FAR.has(d) ? 'far' : ''}">${d}</td>
        </tr>`)}
      </tbody>
    </table>`;
  }

  private renderBlur() {
    return html`<svg class="blur" width="1784" height="911" viewBox="72 202 1784 911" shape-rendering="crispEdges">
      ${BANDS.map((y) => svg`<rect x="490" y=${y} width="342" height="8" fill="#f4f4f4"/>`)}
      <rect x="1142" y="272" width="294" height="9" fill="#e2e2e2"/>
      <rect x="832" y="232" width="8" height="184" fill="#f7f7f7"/>
      <rect x="984" y="232" width="6" height="184" fill="#f8f8f8"/>
      <rect x="1280" y="288" width="8" height="128" fill="#f8f8f8"/>
      ${BLURS.map(([x, y, cols, ...shades]) => blurCells(x, y, cols, shades))}
      <path d="M1368.500 645v20" stroke="#000"/>
    </svg>`;
  }

  private renderStatus() {
    return html`<div class="status">
      <span class="s-page">Page 20 of 24</span>
      <span class="s-words">13353 words</span>
      <span class="s-spell">${icons.spell}</span>
      <span class="s-lang">French (Burkina Faso)</span>
      <span class="s-pred">Text Predictions: On</span>
      <span class="s-acc">${icons.access}</span>
      <span>Accessibility: Investigate</span>
      <div class="s-right">
        <span class="s-focus">${icons.focus}<span>Focus</span></span>
        <span class="s-read">${icons.read}</span>
        <span class="s-print">${icons.print}</span>
        <span class="s-web">${icons.web}</span>
        <div class="zoom">
          <svg width="130" height="14" viewBox="1746 0 130 14">
            <path d="M1746 7h8M1759 7h100M1809.500 4.500v5M1864 7h8M1868 3v8" stroke="#ccc"/>
            <rect x="1821" y="2" width="5" height="10" fill="#aaa"/>
          </svg>
        </div>
        <span class="s-pct">219%</span>
      </div>
    </div>`;
  }

  render() {
    return html`
      ${this.renderTitle()}
      ${this.renderTabs()}
      ${this.renderRibbon()}
      ${this.renderRuler()}
      <div class="main">
        ${this.renderVRuler()}
        <div class="gutter"></div>
        <div class="page">${this.renderTable()}${this.renderBlur()}</div>
        <div class="side">
          <div class="vscroll">
            <svg width="9" height="7" viewBox="0 0 9 7"><path d="M0 7l4.500-7L9 7z" fill="#aaa"/></svg>
            <div class="vthumb"></div>
            <svg width="9" height="7" viewBox="0 0 9 7"><path d="M0 0l4.500 7L9 0z" fill="#aaa"/></svg>
          </div>
        </div>
      </div>
      <div class="hscroll">
        <svg width="6" height="9" viewBox="0 0 6 9"><path d="M6 0L0 4.500 6 9z" fill="#aaa"/></svg>
        <div class="hthumb"></div>
        <svg width="6" height="9" viewBox="0 0 6 9"><path d="M0 0l6 4.500L0 9z" fill="#aaa"/></svg>
      </div>
      ${this.renderStatus()}
      <svg class="overlay" width="1920" height="1152" viewBox="0 0 1920 1152">
        <path d="M1543 383L1388 213" stroke="#b01818" stroke-width="2.200" fill="none"/>
        <path d="M1378 202l5 21 16-12z" fill="#ea1119"/>
        <ellipse cx="258" cy="1134" rx="93" ry="25" fill="none" stroke="#b01515" stroke-width="1.800"/>
      </svg>
      <div class="note">Same decimal tab<br />used in entire column</div>
    `;
  }
}
